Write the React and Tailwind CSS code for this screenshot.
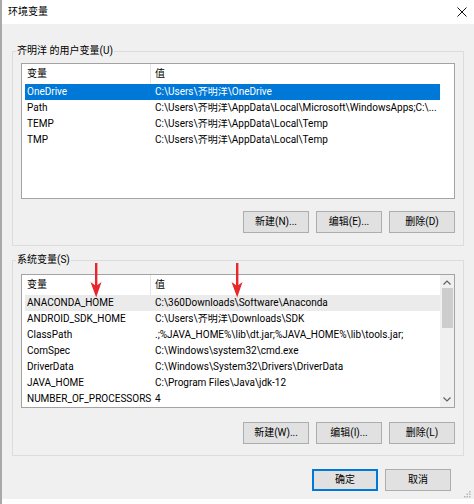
import React from "react";

const userVars = [
  { name: "OneDrive", value: "C:\\Users\\齐明洋\\OneDrive", selected: true },
  { name: "Path", value: "C:\\Users\\齐明洋\\AppData\\Local\\Microsoft\\WindowsApps;C:\\..." },
  { name: "TEMP", value: "C:\\Users\\齐明洋\\AppData\\Local\\Temp" },
  { name: "TMP", value: "C:\\Users\\齐明洋\\AppData\\Local\\Temp" },
];

const sysVars = [
  { name: "ANACONDA_HOME", value: "C:\\360Downloads\\Software\\Anaconda", hover: true },
  { name: "ANDROID_SDK_HOME", value: "C:\\Users\\齐明洋\\Downloads\\SDK" },
  { name: "ClassPath", value: ".;%JAVA_HOME%\\lib\\dt.jar;%JAVA_HOME%\\lib\\tools.jar;" },
  { name: "ComSpec", value: "C:\\Windows\\system32\\cmd.exe" },
  { name: "DriverData", value: "C:\\Windows\\System32\\Drivers\\DriverData" },
  { name: "JAVA_HOME", value: "C:\\Program Files\\Java\\jdk-12" },
  { name: "NUMBER_OF_PROCESSORS", value: "4" },
];

const font = { fontFamily: '"Roboto", "Noto Sans CJK SC", sans-serif' };

const Row = ({ item }) => {
  let cls = "text-black";
  if (item.selected) cls = "bg-[#0078d7] text-white";
  else if (item.hover) cls = "bg-[#ebebeb] text-black";
  return (
    <div className={`ml-[3px] flex h-[16px] w-[415px] items-center whitespace-nowrap ${cls}`}>
      <div className="w-[126px] pl-[2px]">{item.name}</div>
      <div className="flex-1 overflow-hidden pl-[4px]">{item.value}</div>
    </div>
  );
};

const Header = () => (
  <div className="ml-[3px] flex h-[20px] w-[415px] items-center">
    <div className="flex h-full w-[126px] items-center border-r border-[#e5e5e5] pl-[2px]">变量</div>
    <div className="pl-[4px]">值</div>
  </div>
);

const Chevron = ({ up }) => (
  <svg width="8" height="5" viewBox="0 0 8 5">
    <path
      d={up ? "M0.5 4.5 L4 1 L7.5 4.5" : "M0.5 0.5 L4 4 L7.5 0.5"}
      fill="none"
      stroke="#606060"
      strokeWidth="1.2"
    />
  </svg>
);

const Button = ({ children, primary }) => (
  <button
    className={`h-[22px] w-[66px] bg-[#e1e1e1] text-black ${
      primary ? "border-2 border-[#0078d7]" : "border border-[#adadad]"
    }`}
  >
    {children}
  </button>
);

const Arrow = ({ left }) => (
  <svg
    className="absolute top-[263px]"
    style={{ left }}
    width="12"
    height="35"
    viewBox="0 0 12 35"
  >
    <rect x="5" y="0" width="2.4" height="24" fill="#e8262b" />
    <path d="M0.5 19 L6.2 34.5 L11.5 19 L6.2 23 Z" fill="#e8262b" />
  </svg>
);

export default function App() {
  return (
    <div className="relative flex h-[504px] w-[474px] flex-col overflow-hidden border-l-2 border-[#a9a9a9] bg-white text-[10px] leading-none" style={font}>
      {/* title bar */}
      <div className="flex h-[24px] items-center justify-between bg-white pl-[6px] pr-[6px]">
        <span className="text-[10px] text-black">环境变量</span>
        <svg width="10" height="10" viewBox="0 0 10 10" className="mr-[1px]">
          <path d="M0.5 0.5 L9.5 9.5 M9.5 0.5 L0.5 9.5" stroke="#111" strokeWidth="1" />
        </svg>
      </div>

      <div className="flex h-[475px] flex-col bg-[#f0f0f0] px-[10px]">
        {/* user variables */}
        <fieldset className="mt-[19px] border border-[#dcdcdc]">
          <legend className="ml-[3px] h-[16px] px-[1px] leading-[16px] text-black">齐明洋 的用户变量(U)</legend>
          <div className="mx-[8px] mt-[4px] h-[136px] border border-[#a3a3a3] bg-white">
            <Header />
            {userVars.map((v) => (
              <Row key={v.name} item={v} />
            ))}
          </div>
          <div className="mx-[8px] mt-[12px] mb-[12px] flex justify-end gap-[7px]">
            <Button>新建(N)...</Button>
            <Button>编辑(E)...</Button>
            <Button>删除(D)</Button>
          </div>
        </fieldset>

        {/* system variables */}
        <fieldset className="mt-[6px] border border-[#dcdcdc]">
          <legend className="ml-[3px] h-[16px] px-[1px] leading-[16px] text-black">系统变量(S)</legend>
          <div className="mx-[8px] mt-[6px] flex h-[134px] border border-[#a3a3a3] bg-white">
            <div className="flex-1">
              <Header />
              {sysVars.map((v) => (
                <Row key={v.name} item={v} />
              ))}
            </div>
            <div className="flex w-[14px] flex-col items-center bg-[#f0f0f0]">
              <div className="flex h-[13px] items-center justify-center pt-[2px]">
                <Chevron up />
              </div>
              <div className="mt-[0px] h-[40px] w-[11px] bg-[#cdcdcd]" />
              <div className="flex-1" />
              <div className="flex h-[14px] items-center justify-center pb-[2px]">
                <Chevron />
              </div>
            </div>
          </div>
          <div className="mx-[8px] mt-[14px] mb-[11px] flex justify-end gap-[7px]">
            <Button>新建(W)...</Button>
            <Button>编辑(I)...</Button>
            <Button>删除(L)</Button>
          </div>
        </fieldset>

        {/* dialog buttons */}
        <div className="mt-[13px] flex justify-end gap-[7px] pr-[13px]">
          <Button primary>确定</Button>
          <Button>取消</Button>
        </div>

        <div className="flex flex-1 items-end justify-end pb-[1px]">
          <svg width="7" height="7" viewBox="0 0 7 7" className="-mr-[7px]">
            <rect x="5" y="0" width="1.5" height="1.5" fill="#b5b5b5" />
            <rect x="2.5" y="2.5" width="1.5" height="1.5" fill="#b5b5b5" />
            <rect x="5" y="2.5" width="1.5" height="1.5" fill="#b5b5b5" />
            <rect x="0" y="5" width="1.5" height="1.5" fill="#b5b5b5" />
            <rect x="2.5" y="5" width="1.5" height="1.5" fill="#b5b5b5" />
            <rect x="5" y="5" width="1.5" height="1.5" fill="#b5b5b5" />
          </svg>
        </div>
      </div>

      <Arrow left={88} />
      <Arrow left={229} />
    </div>
  );
}
